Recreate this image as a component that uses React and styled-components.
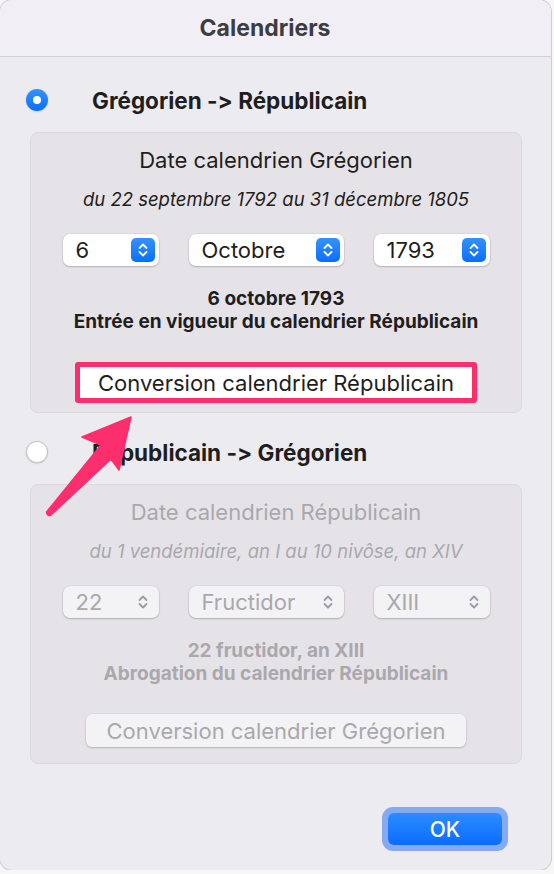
import React from "react";
import styled, { createGlobalStyle } from "styled-components";

const Global = createGlobalStyle`
  html, body { margin: 0; padding: 0; background: #f7f7f8; }
  body {
    font-family: "Inter", "Liberation Sans", sans-serif;
    -webkit-font-smoothing: antialiased;
    font-variant-ligatures: none;
    font-feature-settings: "calt" 0, "liga" 0;
  }
`;

const Window = styled.div`
  position: relative;
  width: 551px;
  height: 870px;
  box-sizing: border-box;
  border-radius: 12px;
  background: #ecebf0;
  box-shadow: 0 0 0 1px #cfcdd2;
  overflow: hidden;
  display: flex;
  flex-direction: column;
`;

const TitleBar = styled.div`
  height: 57px;
  flex: none;
  box-sizing: border-box;
  padding-right: 21px;
  background: #f1eff5;
  border-bottom: 1px solid #d3d1d6;
  display: flex;
  align-items: center;
  justify-content: center;
  font-size: 23px;
  font-weight: 700;
  color: #3d3c40;
`;

const Content = styled.div`
  display: flex;
  flex-direction: column;
  flex: 1;
`;

const RadioRow = styled.div`
  display: flex;
  align-items: center;
  height: 22px;
  margin-top: ${(p) => p.$top}px;
  padding-left: 26px;
`;

const Radio = styled.span`
  width: 22px;
  height: 22px;
  box-sizing: border-box;
  border-radius: 50%;
  flex: none;
  display: flex;
  align-items: center;
  justify-content: center;
  background: ${(p) => (p.$on ? "linear-gradient(#3592ff, #0a6efc)" : "#ffffff")};
  border: ${(p) => (p.$on ? "none" : "1px solid #c6c4c9")};
  box-shadow: 0 0.5px 1.5px rgba(0, 0, 0, 0.18);
  &::after {
    content: "";
    display: ${(p) => (p.$on ? "block" : "none")};
    width: 8px;
    height: 8px;
    border-radius: 50%;
    background: #fff;
  }
`;

const RadioLabel = styled.span`
  margin-left: 44px;
  font-size: 22.5px;
  font-weight: 700;
  color: #1e1e20;
`;

const Group = styled.div`
  margin: 21px 0 0 30px;
  width: 492px;
  height: ${(p) => p.$h}px;
  box-sizing: border-box;
  background: #e6e3e8;
  border: 1px solid #dcd9de;
  border-radius: 8px;
  display: flex;
  flex-direction: column;
  align-items: center;
  color: ${(p) => (p.$disabled ? "#aaa8ad" : "#1e1e20")};
`;

const Heading = styled.div`
  margin-top: 14px;
  font-size: 22px;
  line-height: 26px;
`;

const Range = styled.div`
  margin-top: 15px;
  font-size: 18.5px;
  line-height: 22px;
  font-style: italic;
`;

const PopupRow = styled.div`
  margin-top: 24px;
  display: flex;
  gap: 30px;
`;

const Popup = styled.div`
  width: ${(p) => p.$w}px;
  height: 32px;
  box-sizing: border-box;
  border-radius: 7px;
  background: ${(p) => (p.$disabled ? "#f3f2f5" : "#ffffff")};
  box-shadow: 0 0 0 0.5px rgba(0, 0, 0, 0.08), 0 1px 2px rgba(0, 0, 0, 0.2);
  display: flex;
  align-items: center;
  justify-content: space-between;
  padding: 0 4px 0 13px;
  font-size: 22px;
  color: ${(p) => (p.$disabled ? "#aaa8ad" : "#1e1e20")};
`;

const Stepper = styled.span`
  width: 24px;
  height: 24px;
  border-radius: 5px;
  display: flex;
  align-items: center;
  justify-content: center;
  background: ${(p) => (p.$disabled ? "transparent" : "linear-gradient(#3592ff, #0a6efc)")};
`;

const Summary = styled.div`
  margin-top: 21px;
  font-size: 19px;
  line-height: 23px;
  font-weight: 700;
  text-align: center;
`;

const Highlight = styled.div`
  margin-top: 29px;
  padding: ${(p) => (p.$on ? 5 : 0)}px;
  border-radius: 3px;
  background: ${(p) => (p.$on ? "#fd2e6e" : "transparent")};
`;

const PushButton = styled.div`
  height: ${(p) => (p.$on ? 31 : 33)}px;
  box-sizing: border-box;
  padding: 0 ${(p) => (p.$on ? 18 : 21)}px;
  border-radius: ${(p) => (p.$on ? 0 : 6)}px;
  background: ${(p) => (p.$disabled ? "#f3f2f5" : "#ffffff")};
  box-shadow: ${(p) => (p.$on ? "none" : "0 0 0 0.5px rgba(0,0,0,0.08), 0 1px 2px rgba(0,0,0,0.18)")};
  display: flex;
  align-items: center;
  font-size: 22px;
  color: ${(p) => (p.$disabled ? "#aaa8ad" : "#1e1e20")};
`;

const Footer = styled.div`
  margin-top: auto;
  display: flex;
  justify-content: flex-end;
  padding: 0 43px 19px 0;
`;

const FocusRing = styled.div`
  padding: 6px;
  border-radius: 11px;
  background: #86a9f4;
`;

const OkButton = styled.div`
  width: 114px;
  height: 32px;
  border-radius: 6px;
  background: linear-gradient(#2b8dff, #0b6cff);
  display: flex;
  align-items: center;
  justify-content: center;
  color: #ffffff;
  font-size: 21px;
  font-weight: 500;
`;

const Arrow = styled.svg`
  position: absolute;
  left: 0;
  top: 0;
  pointer-events: none;
`;

function Chevrons({ color }) {
  return (
    <svg width="12" height="16" viewBox="0 0 12 16">
      <path d="M2.5 6 L6 2.5 L9.5 6" fill="none" stroke={color} strokeWidth="1.8" strokeLinecap="round" strokeLinejoin="round" />
      <path d="M2.5 10 L6 13.5 L9.5 10" fill="none" stroke={color} strokeWidth="1.8" strokeLinecap="round" strokeLinejoin="round" />
    </svg>
  );
}

function Select({ w, value, disabled }) {
  return (
    <Popup $w={w} $disabled={disabled}>
      <span>{value}</span>
      <Stepper $disabled={disabled}>
        <Chevrons color={disabled ? "#9d9ba0" : "#ffffff"} />
      </Stepper>
    </Popup>
  );
}

function Converter({ disabled, heading, range, values, lines, button, highlight }) {
  return (
    <Group $h={disabled ? 280 : 281} $disabled={disabled}>
      <Heading>{heading}</Heading>
      <Range>{range}</Range>
      <PopupRow>
        <Select w={96} value={values[0]} disabled={disabled} />
        <Select w={155} value={values[1]} disabled={disabled} />
        <Select w={116} value={values[2]} disabled={disabled} />
      </PopupRow>
      <Summary>
        {lines[0]}
        <br />
        {lines[1]}
      </Summary>
      <Highlight $on={highlight}>
        <PushButton $on={highlight} $disabled={disabled}>{button}</PushButton>
      </Highlight>
    </Group>
  );
}

export default function App() {
  return (
    <>
      <Global />
      <Window>
        <TitleBar>Calendriers</TitleBar>
        <Content>
          <RadioRow $top={32}>
            <Radio $on />
            <RadioLabel>Grégorien -&gt; Républicain</RadioLabel>
          </RadioRow>
          <Converter
            heading="Date calendrien Grégorien"
            range="du 22 septembre 1792 au 31 décembre 1805"
            values={["6", "Octobre", "1793"]}
            lines={["6 octobre 1793", "Entrée en vigueur du calendrier Républicain"]}
            button="Conversion calendrier Républicain"
            highlight
          />
          <RadioRow $top={28}>
            <Radio />
            <RadioLabel>Républicain -&gt; Grégorien</RadioLabel>
          </RadioRow>
          <Converter
            disabled
            heading="Date calendrien Républicain"
            range="du 1 vendémiaire, an I au 10 nivôse, an XIV"
            values={["22", "Fructidor", "XIII"]}
            lines={["22 fructidor, an XIII", "Abrogation du calendrier Républicain"]}
            button="Conversion calendrier Grégorien"
          />
        </Content>
        <Footer>
          <FocusRing>
            <OkButton>OK</OkButton>
          </FocusRing>
        </Footer>
        <Arrow width="554" height="874" viewBox="0 0 554 874">
          <path
            d="M131 417 L82 437 L101 445 L46.5 512 Q47 516 50.5 515.5 L111 459 L119 470 Z"
            fill="#fd2e6e"
            stroke="#fd2e6e"
            strokeWidth="1.5"
            strokeLinejoin="round"
          />
        </Arrow>
      </Window>
    </>
  );
}
